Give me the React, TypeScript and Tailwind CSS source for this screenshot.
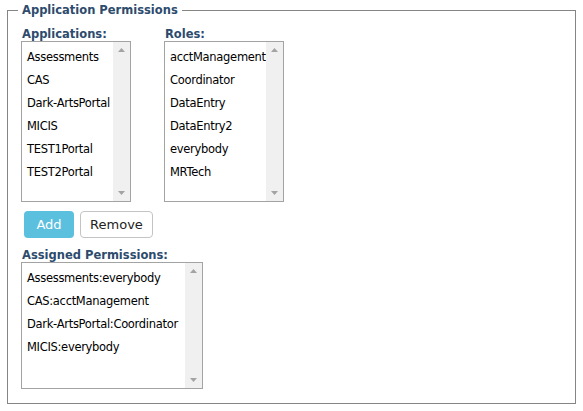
import React from "react";

const applications = ["Assessments", "CAS", "Dark-ArtsPortal", "MICIS", "TEST1Portal", "TEST2Portal"];
const roles = ["acctManagement", "Coordinator", "DataEntry", "DataEntry2", "everybody", "MRTech"];
const assigned = [
	"Assessments:everybody",
	"CAS:acctManagement",
	"Dark-ArtsPortal:Coordinator",
	"MICIS:everybody",
];

function ListBox({ items, className }: { items: string[]; className: string }) {
	return (
		<div className={`flex border border-[#a3a3a3] bg-white ${className}`}>
			<div className="flex-1 overflow-hidden pt-[4px] pl-[5px] tracking-[-0.3px]">
				{items.map((item) => (
					<div key={item} className="h-[23px] whitespace-nowrap leading-[23px] text-black">
						{item}
					</div>
				))}
			</div>
			<div className="flex w-[17px] flex-col items-center justify-between bg-[#f0f0f0] py-[6px]">
				<svg width="7" height="4" viewBox="0 0 7 4">
					<path d="M3.5 0 L7 4 L0 4 Z" fill="#a3a3a3" />
				</svg>
				<svg width="7" height="4" viewBox="0 0 7 4">
					<path d="M0 0 L7 0 L3.5 4 Z" fill="#a3a3a3" />
				</svg>
			</div>
		</div>
	);
}

export default function App() {
	return (
		<div className="h-[411px] w-[583px] bg-white px-[7px] pt-[2px] font-['DejaVu_Sans',sans-serif] text-[11.5px]">
			<fieldset className="h-[402px] border border-[#858585] pl-[13px]">
				<legend className="ml-[-3px] px-[4px] text-[11.5px] font-bold leading-[16px] text-[#2d4b6d]">
					Application Permissions
				</legend>

				<div className="mt-[10px] flex gap-[33px]">
					<div>
						<div className="h-[13px] pl-[1px] font-bold leading-[13px] text-[#2d4b6d]">Applications:</div>
						<ListBox items={applications} className="h-[161px] w-[110px]" />
					</div>
					<div>
						<div className="h-[13px] pl-[1px] font-bold leading-[13px] text-[#2d4b6d]">Roles:</div>
						<ListBox items={roles} className="h-[161px] w-[120px]" />
					</div>
				</div>

				<div className="mt-[9px] flex gap-[6px] pl-[3px]">
					<button className="h-[27px] w-[50px] rounded-[4px] bg-[#5bc0de] text-[13px] text-white">Add</button>
					<button className="h-[27px] w-[73px] rounded-[4px] border border-[#c4c4c4] bg-white text-[13px] text-[#222]">
						Remove
					</button>
				</div>

				<div className="mt-[11px] h-[13px] pl-[1px] font-bold leading-[13px] text-[#2d4b6d]">
					Assigned Permissions:
				</div>
				<ListBox items={assigned} className="h-[127px] w-[182px]" />
			</fieldset>
		</div>
	);
}
